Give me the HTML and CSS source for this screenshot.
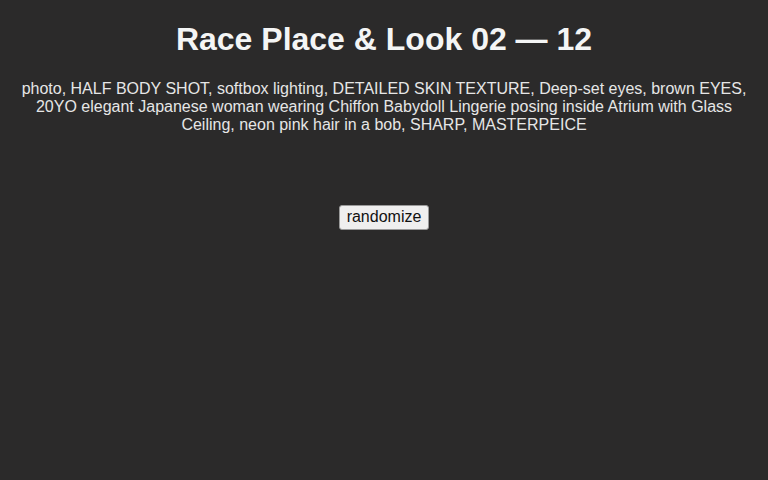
FILE: index.html
```html
<!DOCTYPE html>
<html>
<head>
<meta charset="utf-8">
<title>Race Place &amp; Look</title>
<link rel="stylesheet" href="styles.css">
</head>
<body>
<main class="page">
  <h1 class="title">Race Place &amp; Look 02 — 12</h1>
  <p class="prompt">photo, HALF BODY SHOT, softbox lighting, DETAILED SKIN TEXTURE, Deep-set eyes, brown EYES, 20YO elegant Japanese woman wearing Chiffon Babydoll Lingerie posing inside Atrium with Glass Ceiling, neon pink hair in a bob, SHARP, MASTERPEICE</p>
  <div class="actions">
    <button class="btn" type="button">randomize</button>
  </div>
</main>
</body>
</html>
```
FILE: styles.css
```css
html, body {
  margin: 0;
  background: #2b2a2a;
  height: 100%;
}

.page {
  font-family: "Liberation Sans", Arial, sans-serif;
  text-align: center;
  padding: 0 8px;
}

.title {
  font-size: 32px;
  font-weight: bold;
  color: #f4f5f5;
  margin: 21px 0 22px;
  line-height: 37px;
}

.prompt {
  font-size: 16px;
  line-height: 18px;
  color: #e6e6e6;
  margin: 0 6px;
}

.actions {
  margin-top: 71px;
  display: flex;
  justify-content: center;
}

.btn {
  font-family: "Liberation Sans", Arial, sans-serif;
  font-size: 16px;
  color: #111;
  background: #efefef;
  border: 1px solid #9a9a9a;
  border-radius: 3px;
  padding: 2px 7px 3px;
  line-height: 18px;
}
```
